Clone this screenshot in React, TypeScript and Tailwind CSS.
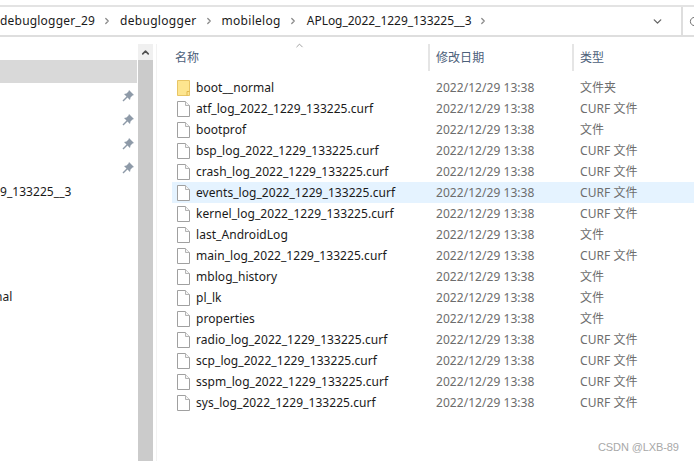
import { ChevronRight, ChevronDown, ChevronUp, RotateCw } from "lucide-react";

const font = "font-['Noto_Sans','Noto_Sans_CJK_SC',sans-serif]";

const files = [
  { name: "boot__normal", type: "文件夹", folder: true },
  { name: "atf_log_2022_1229_133225.curf", type: "CURF 文件" },
  { name: "bootprof", type: "文件" },
  { name: "bsp_log_2022_1229_133225.curf", type: "CURF 文件" },
  { name: "crash_log_2022_1229_133225.curf", type: "CURF 文件" },
  { name: "events_log_2022_1229_133225.curf", type: "CURF 文件", hover: true },
  { name: "kernel_log_2022_1229_133225.curf", type: "CURF 文件" },
  { name: "last_AndroidLog", type: "文件" },
  { name: "main_log_2022_1229_133225.curf", type: "CURF 文件" },
  { name: "mblog_history", type: "文件" },
  { name: "pl_lk", type: "文件" },
  { name: "properties", type: "文件" },
  { name: "radio_log_2022_1229_133225.curf", type: "CURF 文件" },
  { name: "scp_log_2022_1229_133225.curf", type: "CURF 文件" },
  { name: "sspm_log_2022_1229_133225.curf", type: "CURF 文件" },
  { name: "sys_log_2022_1229_133225.curf", type: "CURF 文件" },
];

const FileIcon = () => (
  <svg width="13" height="16" viewBox="0 0 13 16" className="shrink-0">
    <path d="M.5.5h8l4 4v11H.5z" fill="#fff" stroke="#a0a0a0" />
    <path d="M8.5.5v4h4" fill="#f4f4f4" stroke="#b4b4b4" />
  </svg>
);

const FolderIcon = () => (
  <svg width="13" height="16" viewBox="0 0 13 16" className="shrink-0">
    <path d="M.5.5h12v15H.5z" fill="#fde58f" stroke="#e8c565" />
    <path d="M10 15.500v-4h2.500" fill="none" stroke="#e3b94f" />
  </svg>
);

const Pin = () => (
  <svg width="12" height="12" viewBox="0 0 12 12">
    <path d="M7 0l5 5-1.500.5L8.500 7.500 8 10 5.500 7.500 1.500 11.500.5 10.500l4-4L2 4l2.500-.5 2-2z" fill="#8e9aa8" />
  </svg>
);

const Sep = () => <ChevronRight size={10} strokeWidth={3} className="text-[#8a8a8a] ml-[7px] mr-[8px] shrink-0" />;

export default function App() {
  return (
    <div className={`${font} w-[694px] h-[461px] overflow-hidden bg-white text-[12px] tracking-[0.05px] text-[#1a1a1a] flex flex-col`}>
      <div className="h-[7px] shrink-0 border-b-2 border-[#e3e3e3]" />
      <div className="h-[30px] shrink-0 border-b-2 border-[#dedede] flex items-center">
        <div className="flex-1 min-w-0 flex items-center whitespace-nowrap overflow-hidden">
          <span className="tracking-[0.2px]">debuglogger_29</span>
          <Sep />
          <span className="tracking-[0.3px]">debuglogger</span>
          <Sep />
          <span className="tracking-[0.3px]">mobilelog</span>
          <Sep />
          <span className="ml-px tracking-[-0.03px]">APLog_2022_1229_133225__3</span>
          <Sep />
        </div>
        <div className="w-[26px] flex justify-center shrink-0 mr-[11px]">
          <ChevronDown size={13} strokeWidth={2.5} className="text-[#666]" />
        </div>
        <div className="w-[13px] h-full border-l-2 border-[#dedede] flex items-center pl-[6px] shrink-0">
          <RotateCw size={11} className="text-[#666] shrink-0" />
        </div>
      </div>

      <div className="flex-1 min-h-0 flex pt-[7px]">
        {/* left nav */}
        <div className="w-[138px] shrink-0 flex flex-col overflow-hidden">
          <div className="h-[16px] shrink-0" />
          <div className="h-[23px] shrink-0 bg-[#d9d9d9] mr-px" />
          <div className="flex flex-col items-end pr-[4px]">
            <div className="h-[25px] flex items-center"><Pin /></div>
            <div className="h-[24px] flex items-center"><Pin /></div>
            <div className="h-[24px] flex items-center"><Pin /></div>
            <div className="h-[24px] flex items-center"><Pin /></div>
          </div>
          <div className="mt-[3px] leading-[18px] whitespace-nowrap">9_133225__3</div>
          <div className="h-[87px] shrink-0" />
          <div className="leading-[18px] ml-[-5px]">nal</div>
        </div>

        {/* nav scrollbar */}
        <div className="w-[15px] shrink-0 bg-[#f0f0f0] flex flex-col">
          <div className="h-[16px] flex items-center justify-center">
            <ChevronUp size={11} strokeWidth={3.5} className="text-[#505050]" />
          </div>
          <div className="flex-1 bg-[#cbcbcb]" />
        </div>
        <div className="w-[3px] shrink-0" />
        <div className="w-px shrink-0 bg-[#f2f2f2]" />

        {/* file list */}
        <div className="flex-1 min-w-0 relative pl-[15px]">
          <ChevronUp size={11} strokeWidth={1.500} className="absolute left-[137px] top-[-4px] text-[#777]" />
          <div className="h-[27px] flex text-[#4c607a]">
            <div className="w-[258px] pl-[3px] flex items-center border-r-2 border-[#e5e5e5]">名称</div>
            <div className="w-[144px] pl-[6px] flex items-center border-r-2 border-[#e5e5e5]">修改日期</div>
            <div className="flex-1 pl-[6px] flex items-center">类型</div>
          </div>
          <div className="mt-[6px] flex flex-col">
            {files.map((f) => (
              <div key={f.name} className={`h-[21px] flex items-center ${f.hover ? "bg-[#e5f3ff]" : ""}`}>
                <div className="w-[258px] pl-[5px] flex items-center gap-[6px] whitespace-nowrap">
                  {f.folder ? <FolderIcon /> : <FileIcon />}
                  <span>{f.name}</span>
                </div>
                <div className="w-[144px] pl-[6px] text-[#6d6d6d]">2022/12/29 13:38</div>
                <div className="flex-1 pl-[6px] text-[#6d6d6d] whitespace-nowrap">{f.type}</div>
              </div>
            ))}
          </div>
          <span className="absolute left-[441px] bottom-[6px] text-[11px] tracking-[-0.1px] text-[#a8a8a8] font-['Liberation_Sans',sans-serif]">CSDN @LXB-89</span>
        </div>
      </div>
    </div>
  );
}
